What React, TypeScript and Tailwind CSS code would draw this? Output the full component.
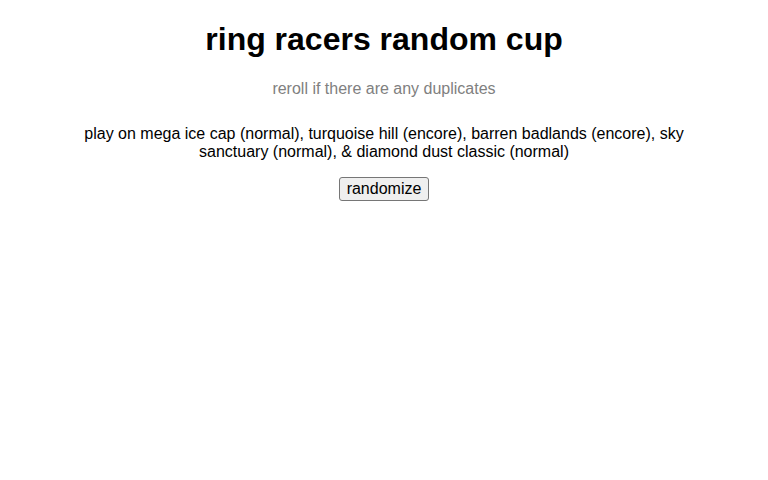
export default function App() {
  return (
    <div
      className="min-h-screen bg-white text-center text-black"
      style={{ fontFamily: '"Liberation Sans", Arial, sans-serif' }}
    >
      <h1 className="pt-[21px] text-[32px] font-bold leading-[37px]">ring racers random cup</h1>
      <p className="mt-[22px] text-[16px] leading-[18px] text-[#808080]">reroll if there are any duplicates</p>
      <p className="mx-auto mt-[27px] max-w-[620px] text-[16px] leading-[18px]">
        play on mega ice cap (normal), turquoise hill (encore), barren badlands (encore), sky sanctuary (normal), &amp; diamond dust classic (normal)
      </p>
      <div className="mt-[16px]">
        <button className="rounded-[3px] border border-[#767676] bg-[#efefef] px-[7px] py-[2px] text-[16px] leading-[18px] text-black">
          randomize
        </button>
      </div>
    </div>
  );
}
